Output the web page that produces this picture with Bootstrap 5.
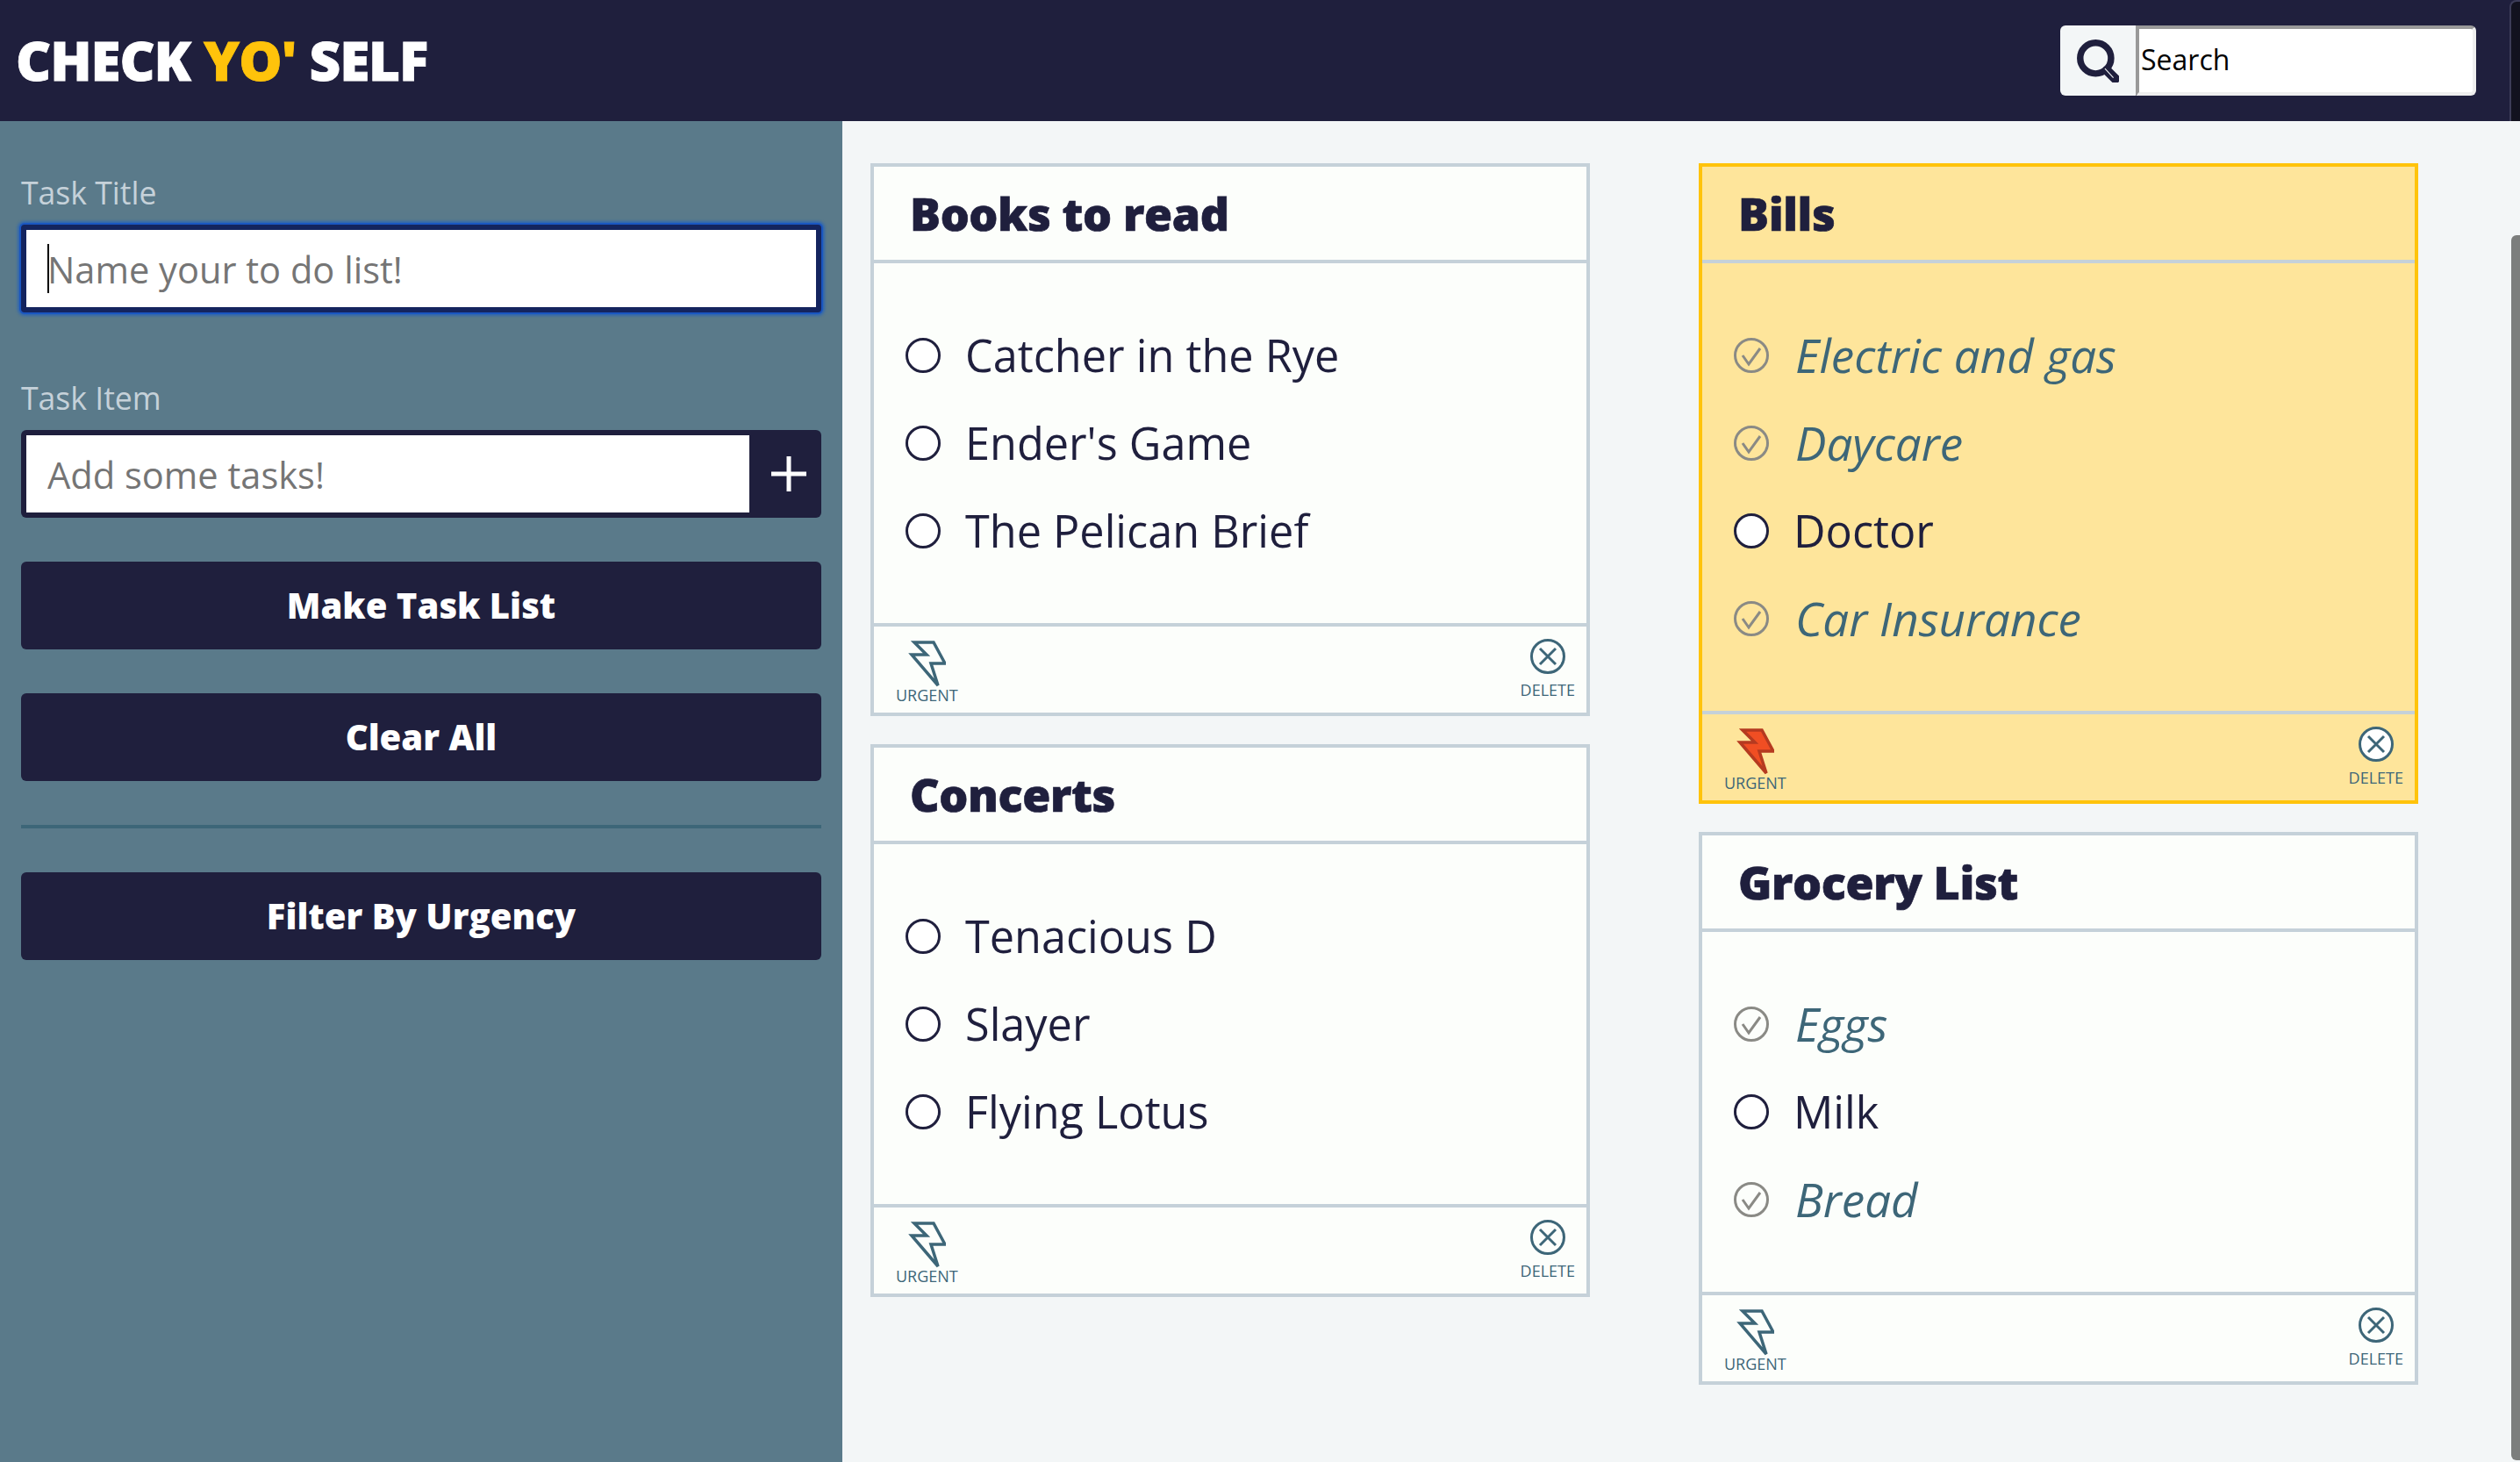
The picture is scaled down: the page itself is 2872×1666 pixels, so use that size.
<!DOCTYPE html>
<html lang="en">
  <head>
    <meta charset="UTF-8" />
    <title>Check Yo' Self</title>
    <link
      href="https://cdn.jsdelivr.net/npm/bootstrap@5.3.2/dist/css/bootstrap.min.css"
      rel="stylesheet"
    />
    <style>
      body {
        font-family: "Open Sans", "Noto Sans", sans-serif;
        background: #f3f6f7;
        color: #1f1f3d;
        height: 1666px;
        overflow: hidden;
        position: relative;
      }
      .top-bar {
        height: 138px;
        background: #1f1f3d;
        padding: 0 50px 0 18px;
      }
      .logo {
        font-size: 62px;
        font-weight: 800;
        line-height: 1;
        color: #fff;
        letter-spacing: -1.1px;
        -webkit-text-stroke: 0.8px currentColor;
        margin-top: -3px;
      }
      .logo span {
        color: #ffc30b;
      }
      .search-box {
        width: 474px;
        height: 80px;
      }
      .search-btn {
        width: 86px;
        background: #f3f6f7;
        border-radius: 6px 0 0 6px;
      }
      .search-box input {
        flex: 1;
        min-width: 0;
        font-family: inherit;
        font-size: 32px;
        color: #000;
        padding: 0 2px 2px;
        background: #fff;
        outline: 0;
        border-style: solid;
        border-width: 4px;
        border-color: #999 #eee #eee #999;
        border-radius: 0 6px 6px 0;
      }
      .search-box input::placeholder {
        color: #000;
        opacity: 1;
      }
      .side-panel {
        width: 960px;
        min-height: 1528px;
        background: #5a7a8a;
        padding: 54px 24px 0;
      }
      .field-label {
        display: block;
        font-size: 35.6px;
        line-height: 54px;
        color: #c5d1d9;
        margin-bottom: 10px;
      }
      .field-wrap {
        position: relative;
        margin-bottom: 70px;
      }
      .field-input.form-control {
        height: 100px;
        border: 6px solid #1f1f3d;
        border-radius: 6px;
        font-size: 41.6px;
        padding: 2px 24px 0;
        color: #1f1f3d;
        background: #fff;
        box-shadow: none;
      }
      .field-input::placeholder {
        color: #757575;
        opacity: 1;
      }
      .field-input.is-focus {
        border-color: #14245e;
        box-shadow: 0 0 0 2px #1a56c0, 0 0 3px 4px rgba(32, 96, 192, 0.7);
        border-radius: 4px;
        caret-color: transparent;
      }
      .fake-caret {
        position: absolute;
        left: 30px;
        top: 22px;
        width: 2px;
        height: 56px;
        background: #000;
      }
      .item-group {
        height: 100px;
        background: #1f1f3d;
        border-radius: 6px;
        padding: 6px 0 6px 6px;
        margin-bottom: 50px;
      }
      .item-group .form-control {
        border: 0;
        border-radius: 0;
        height: 88px;
        font-size: 41.6px;
        padding: 2px 24px 0;
        box-shadow: none;
      }
      .item-group .form-control::placeholder {
        color: #757575;
        opacity: 1;
      }
      .add-btn {
        width: 82px;
        flex: none;
        padding: 0 0 0 7px;
        border: 0;
      }
      .panel-btn.btn {
        display: block;
        width: 100%;
        height: 100px;
        background: #1f1f3d;
        border: 0;
        border-radius: 6px;
        color: #fff;
        font-size: 40px;
        font-weight: 800;
        margin-bottom: 50px;
      }
      .panel-rule {
        height: 4px;
        margin: 0 0 50px;
        background: #3d6678;
        border: 0;
        opacity: 1;
      }
      .board {
        padding: 48px 0 0 32px;
      }
      .board-col {
        width: 820px;
        gap: 32px;
      }
      .board-col + .board-col {
        margin-left: 124px;
      }
      .task-card.card {
        border: 4px solid #c5d1d9;
        border-radius: 0;
        background: #fcfefb;
      }
      .task-card.is-urgent {
        border-color: #ffc30b;
        background: #fee59b;
      }
      .task-head {
        height: 110px;
        border-bottom: 4px solid #c5d1d9;
        padding-left: 41px;
      }
      .task-head h2 {
        font-size: 52px;
        font-weight: 800;
        letter-spacing: -0.4px;
        -webkit-text-stroke: 0.7px currentColor;
        margin: 0;
        color: #1f1f3d;
      }
      .task-items {
        padding: 55px 0 55px 36px;
        margin: 0;
        list-style: none;
      }
      .task-items li {
        height: 100px;
        gap: 28px;
        font-size: 50.4px;
        color: #1f1f3d;
      }
      .task-items li.is-done {
        font-style: italic;
        font-size: 53px;
        gap: 30px;
        color: #3d6678;
      }
      .task-items svg {
        flex: none;
      }
      .task-foot {
        height: 98px;
        padding: 0 13px 0 25px;
        box-sizing: content-box;
      }
      .task-foot-wrap {
        border-top: 4px solid #c5d1d9;
      }
      .foot-action {
        font-size: 18px;
        line-height: 20px;
        color: #3d6678;
      }
      .foot-urgent {
        padding-top: 14px;
      }
      .foot-urgent svg {
        margin-bottom: -2px;
      }
      .foot-delete {
        padding-top: 14px;
      }
      .foot-delete svg {
        margin-bottom: 8px;
      }
      .bar-stub {
        position: absolute;
        top: 0;
        right: 0;
        width: 12px;
        height: 138px;
        background: #12121f;
        border: 2px solid #3c3c58;
        border-width: 2px 0 0 2px;
        border-top-left-radius: 8px;
      }
      .bar-thumb {
        position: absolute;
        top: 268px;
        right: 0;
        width: 10px;
        height: 1396px;
        background: #7c7e7d;
        border-radius: 6px 0 0 6px;
      }
    </style>
  </head>
  <body>
    <svg width="0" height="0" class="d-block">
      <symbol id="open-dot" viewBox="0 0 40 40">
        <circle cx="20" cy="20" r="18.5" fill="#fff" stroke="#1f1f3d" stroke-width="3" />
      </symbol>
      <symbol id="done-dot" viewBox="0 0 40 40">
        <circle cx="20" cy="20" r="18.5" fill="none" stroke="#8a8a85" stroke-width="3" />
        <path d="M10 20l7 10L30 12" fill="none" stroke="#8a8a85" stroke-width="3" />
      </symbol>
      <symbol id="bolt" viewBox="0 0 44 56">
        <path d="M8 4h22l13 24H27l8 25L5 18h17z" fill="none" stroke="#3d6678" stroke-width="3.5" />
      </symbol>
      <symbol id="bolt-hot" viewBox="0 0 44 56">
        <path d="M8 4h22l13 24H27l8 25L5 18h17z" fill="#f04e23" stroke="#b53a20" stroke-width="3.5" />
      </symbol>
      <symbol id="cross" viewBox="0 0 40 40">
        <circle cx="20" cy="20" r="18.5" fill="none" stroke="#3d6678" stroke-width="3" />
        <path d="M11 11l18 18M29 11L11 29" stroke="#3d6678" stroke-width="3" />
      </symbol>
      <symbol id="cross-light" viewBox="0 0 40 40">
        <circle cx="20" cy="20" r="18.5" fill="#fff" stroke="#3d6678" stroke-width="3" />
        <path d="M11 11l18 18M29 11L11 29" stroke="#3d6678" stroke-width="3" />
      </symbol>
    </svg>

    <header class="top-bar d-flex align-items-center justify-content-between">
      <div class="logo">CHECK <span>YO'</span> SELF</div>
      <form class="search-box d-flex">
        <div class="search-btn d-flex align-items-center justify-content-center">
          <svg width="48" height="49" viewBox="0 0 45 46">
            <circle cx="20" cy="20" r="16.5" fill="none" stroke="#1f1f3d" stroke-width="7" />
            <path d="M32 33l9 9" stroke="#1f1f3d" stroke-width="10" stroke-linecap="round" />
            <path d="M30 31l9 10" stroke="#f3f6f7" stroke-width="1" />
          </svg>
        </div>
        <input type="text" placeholder="Search" />
      </form>
    </header>

    <div class="d-flex">
      <aside class="side-panel">
        <label class="field-label" for="title-input">Task Title</label>
        <div class="field-wrap">
          <input id="title-input" type="text" class="form-control field-input is-focus" placeholder="Name your to do list!" />
          <span class="fake-caret"></span>
        </div>

        <label class="field-label" for="item-input">Task Item</label>
        <div class="item-group d-flex">
          <input id="item-input" type="text" class="form-control" placeholder="Add some tasks!" />
          <button type="button" class="btn add-btn d-flex align-items-center justify-content-center">
            <svg width="40" height="40" viewBox="0 0 40 40">
              <path d="M20 0v40M0 20h40" stroke="#fff" stroke-width="5" />
            </svg>
          </button>
        </div>

        <button type="button" class="btn panel-btn">Make Task List</button>
        <button type="button" class="btn panel-btn">Clear All</button>
        <hr class="panel-rule" />
        <button type="button" class="btn panel-btn">Filter By Urgency</button>
      </aside>

      <main class="board d-flex align-items-start">
        <div class="board-col d-flex flex-column">
          <section class="card task-card">
            <div class="task-head d-flex align-items-center"><h2>Books to read</h2></div>
            <ul class="task-items">
              <li class="d-flex align-items-center"><svg width="40" height="40"><use href="#open-dot" /></svg>Catcher in the Rye</li>
              <li class="d-flex align-items-center"><svg width="40" height="40"><use href="#open-dot" /></svg>Ender's Game</li>
              <li class="d-flex align-items-center"><svg width="40" height="40"><use href="#open-dot" /></svg>The Pelican Brief</li>
            </ul>
            <div class="task-foot-wrap">
              <div class="task-foot d-flex justify-content-between">
                <div class="foot-action foot-urgent d-flex flex-column align-items-center">
                  <svg width="44" height="56"><use href="#bolt" /></svg>URGENT
                </div>
                <div class="foot-action foot-delete d-flex flex-column align-items-center">
                  <svg width="40" height="40"><use href="#cross" /></svg>DELETE
                </div>
              </div>
            </div>
          </section>

          <section class="card task-card">
            <div class="task-head d-flex align-items-center"><h2>Concerts</h2></div>
            <ul class="task-items">
              <li class="d-flex align-items-center"><svg width="40" height="40"><use href="#open-dot" /></svg>Tenacious D</li>
              <li class="d-flex align-items-center"><svg width="40" height="40"><use href="#open-dot" /></svg>Slayer</li>
              <li class="d-flex align-items-center"><svg width="40" height="40"><use href="#open-dot" /></svg>Flying Lotus</li>
            </ul>
            <div class="task-foot-wrap">
              <div class="task-foot d-flex justify-content-between">
                <div class="foot-action foot-urgent d-flex flex-column align-items-center">
                  <svg width="44" height="56"><use href="#bolt" /></svg>URGENT
                </div>
                <div class="foot-action foot-delete d-flex flex-column align-items-center">
                  <svg width="40" height="40"><use href="#cross" /></svg>DELETE
                </div>
              </div>
            </div>
          </section>
        </div>

        <div class="board-col d-flex flex-column">
          <section class="card task-card is-urgent">
            <div class="task-head d-flex align-items-center"><h2>Bills</h2></div>
            <ul class="task-items">
              <li class="is-done d-flex align-items-center"><svg width="40" height="40"><use href="#done-dot" /></svg>Electric and gas</li>
              <li class="is-done d-flex align-items-center"><svg width="40" height="40"><use href="#done-dot" /></svg>Daycare</li>
              <li class="d-flex align-items-center"><svg width="40" height="40"><use href="#open-dot" /></svg>Doctor</li>
              <li class="is-done d-flex align-items-center"><svg width="40" height="40"><use href="#done-dot" /></svg>Car Insurance</li>
            </ul>
            <div class="task-foot-wrap">
              <div class="task-foot d-flex justify-content-between">
                <div class="foot-action foot-urgent d-flex flex-column align-items-center">
                  <svg width="44" height="56"><use href="#bolt-hot" /></svg>URGENT
                </div>
                <div class="foot-action foot-delete d-flex flex-column align-items-center">
                  <svg width="40" height="40"><use href="#cross-light" /></svg>DELETE
                </div>
              </div>
            </div>
          </section>

          <section class="card task-card">
            <div class="task-head d-flex align-items-center"><h2>Grocery List</h2></div>
            <ul class="task-items">
              <li class="is-done d-flex align-items-center"><svg width="40" height="40"><use href="#done-dot" /></svg>Eggs</li>
              <li class="d-flex align-items-center"><svg width="40" height="40"><use href="#open-dot" /></svg>Milk</li>
              <li class="is-done d-flex align-items-center"><svg width="40" height="40"><use href="#done-dot" /></svg>Bread</li>
            </ul>
            <div class="task-foot-wrap">
              <div class="task-foot d-flex justify-content-between">
                <div class="foot-action foot-urgent d-flex flex-column align-items-center">
                  <svg width="44" height="56"><use href="#bolt" /></svg>URGENT
                </div>
                <div class="foot-action foot-delete d-flex flex-column align-items-center">
                  <svg width="40" height="40"><use href="#cross" /></svg>DELETE
                </div>
              </div>
            </div>
          </section>
        </div>
      </main>
    </div>

    <div class="bar-stub"></div>
    <div class="bar-thumb"></div>

    <script src="https://cdn.jsdelivr.net/npm/bootstrap@5.3.2/dist/js/bootstrap.bundle.min.js"></script>
  </body>
</html>
